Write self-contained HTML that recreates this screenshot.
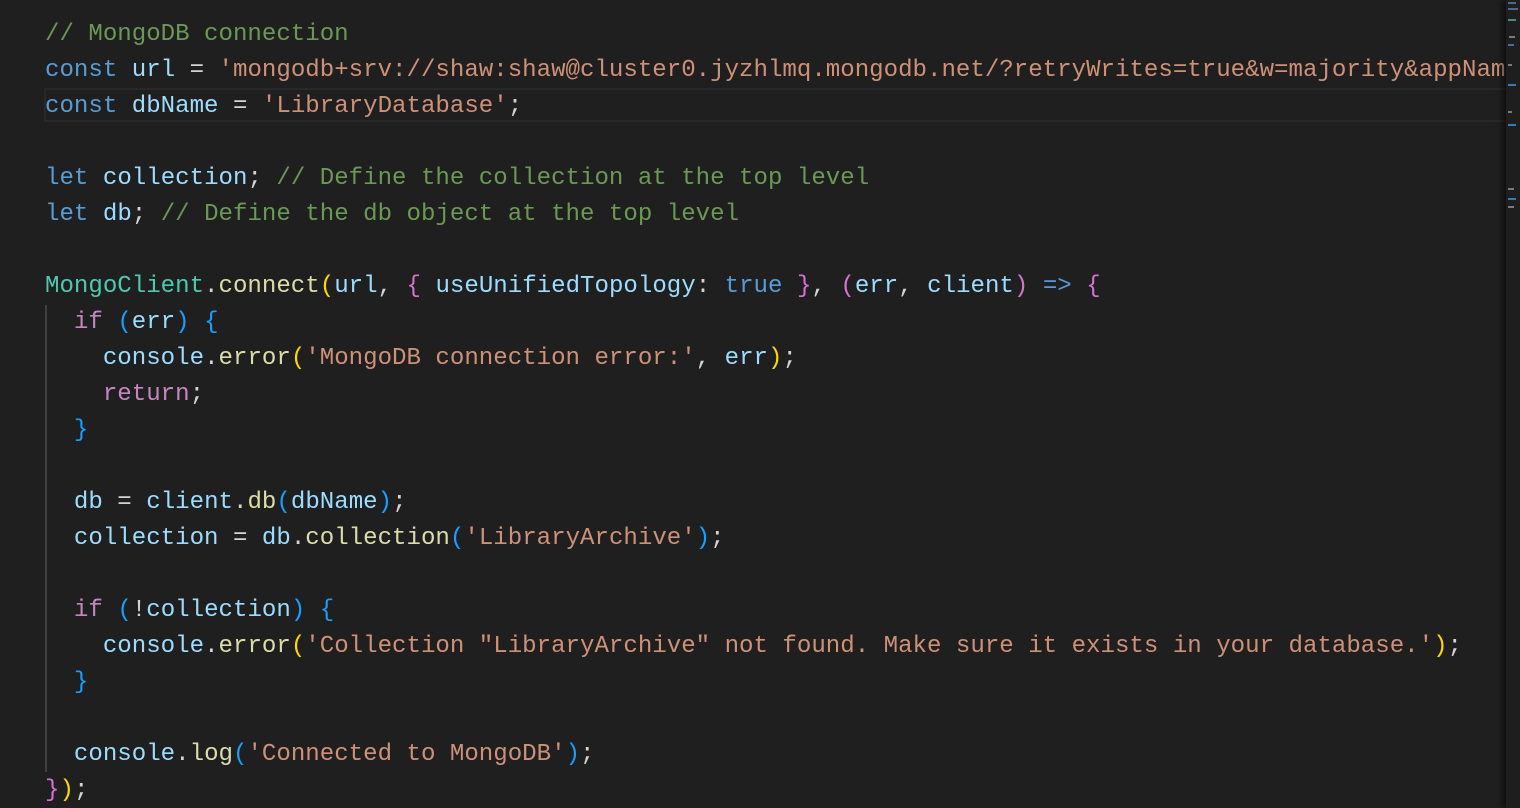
<!DOCTYPE html>
<html><head><meta charset="utf-8"><style>
html,body{margin:0;padding:0;background:#1f1f1f;width:1520px;height:808px;overflow:hidden}
.ed{position:absolute;left:0;top:0;width:1506px;height:808px;overflow:hidden}
.hl{position:absolute;left:44px;top:88px;width:1470px;height:34px;border:2px solid #282828;box-sizing:border-box}
pre{position:absolute;left:45px;top:17px;margin:0;font-family:"Liberation Mono",monospace;font-size:24.1px;line-height:36px;color:#d4d4d4;white-space:pre}
.c{color:#6a9955}.k{color:#569cd6}.v{color:#9cdcfe}.s{color:#ce9178}.f{color:#dcdcaa}.t{color:#4ec9b0}.p{color:#c586c0}
.g{color:#ffd700}.m{color:#da70d6}.b{color:#179fff}
.guide{position:absolute;left:45px;top:305px;width:2px;height:467px;background:#404040}
.mini{position:absolute;left:1506px;top:0;width:14px;height:808px;background:#1e1e1e;box-shadow:-4px 0 6px rgba(0,0,0,.5)}
.mini i{position:absolute;height:2px;display:block}
</style></head><body>
<div class="ed">
<div class="hl"></div>
<div class="guide"></div>
<pre><span class="c">// MongoDB connection</span>
<span class="k">const</span> <span class="v">url</span> = <span class="s">'mongodb+srv://shaw:shaw@cluster0.jyzhlmq.mongodb.net/?retryWrites=true&amp;w=majority&amp;appName=Cluster0'</span>;
<span class="k">const</span> <span class="v">dbName</span> = <span class="s">'LibraryDatabase'</span>;

<span class="k">let</span> <span class="v">collection</span>; <span class="c">// Define the collection at the top level</span>
<span class="k">let</span> <span class="v">db</span>; <span class="c">// Define the db object at the top level</span>

<span class="t">MongoClient</span>.<span class="f">connect</span><span class="g">(</span><span class="v">url</span>, <span class="m">{</span> <span class="v">useUnifiedTopology</span>: <span class="k">true</span> <span class="m">}</span>, <span class="m">(</span><span class="v">err</span>, <span class="v">client</span><span class="m">)</span> <span class="k">=&gt;</span> <span class="m">{</span>
  <span class="p">if</span> <span class="b">(</span><span class="v">err</span><span class="b">)</span> <span class="b">{</span>
    <span class="v">console</span>.<span class="f">error</span><span class="g">(</span><span class="s">'MongoDB connection error:'</span>, <span class="v">err</span><span class="g">)</span>;
    <span class="p">return</span>;
  <span class="b">}</span>

  <span class="v">db</span> = <span class="v">client</span>.<span class="f">db</span><span class="b">(</span><span class="v">dbName</span><span class="b">)</span>;
  <span class="v">collection</span> = <span class="v">db</span>.<span class="f">collection</span><span class="b">(</span><span class="s">'LibraryArchive'</span><span class="b">)</span>;

  <span class="p">if</span> <span class="b">(</span>!<span class="v">collection</span><span class="b">)</span> <span class="b">{</span>
    <span class="v">console</span>.<span class="f">error</span><span class="g">(</span><span class="s">'Collection "LibraryArchive" not found. Make sure it exists in your database.'</span><span class="g">)</span>;
  <span class="b">}</span>

  <span class="v">console</span>.<span class="f">log</span><span class="b">(</span><span class="s">'Connected to MongoDB'</span><span class="b">)</span>;
<span class="m">}</span><span class="g">)</span>;</pre>
</div>
<div class="mini">
<i style="left:2px;top:2px;width:8px;background:#4a6a8a"></i>
<i style="left:2px;top:8px;width:10px;background:#4a6a8a"></i>
<i style="left:2px;top:19px;width:8px;background:#4a8a7a"></i>
<i style="left:3px;top:36px;width:6px;background:#7a7a7a"></i>
<i style="left:2px;top:44px;width:6px;background:#4a6a9a"></i>
<i style="left:2px;top:64px;width:4px;background:#7a7a7a"></i>
<i style="left:2px;top:84px;width:8px;background:#3a7ab0"></i>
<i style="left:2px;top:111px;width:4px;background:#7a7a7a"></i>
<i style="left:2px;top:124px;width:8px;background:#3a7ab0"></i>
<i style="left:2px;top:188px;width:6px;background:#7a7a7a"></i>
<i style="left:2px;top:198px;width:8px;background:#3a7ab0"></i>
<i style="left:2px;top:206px;width:6px;background:#7a7a7a"></i>
</div>
</body></html>
